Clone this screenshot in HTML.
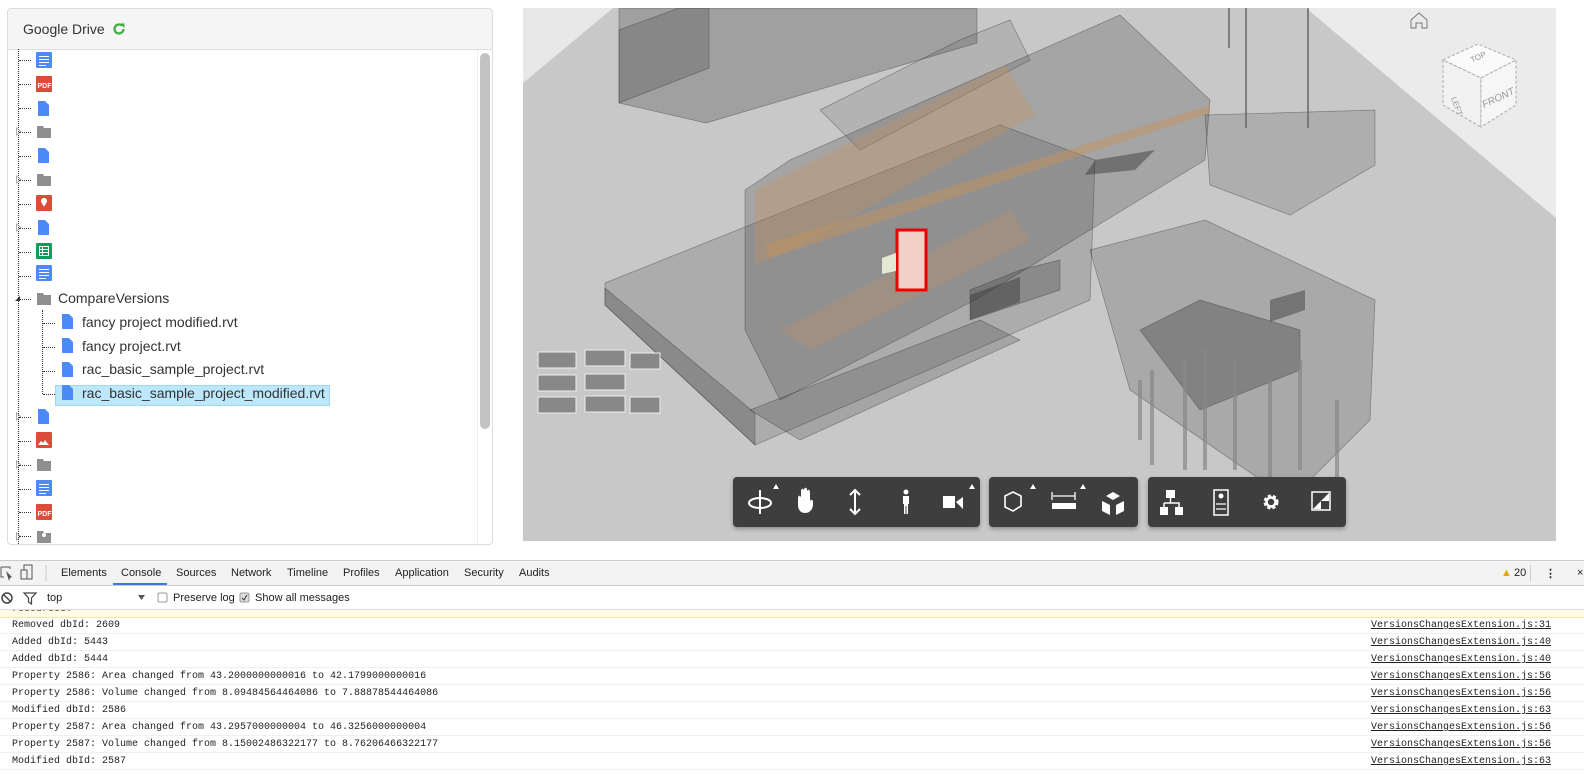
<!DOCTYPE html>
<html><head><meta charset="utf-8"><style>
*{margin:0;padding:0;box-sizing:border-box}
body{width:1584px;height:779px;background:#fff;position:relative;overflow:hidden;font-family:"Liberation Sans",sans-serif}
.panel{position:absolute;left:7px;top:8px;width:486px;height:537px;border:1px solid #ddd;border-radius:4px;overflow:hidden;background:#fff}
.hdr{height:41px;background:#f5f5f5;border-bottom:1px solid #ddd;font-size:14px;color:#333;padding:12px 0 0 15px}
.ab{position:absolute}
.dv{position:absolute;border-left:1px dotted #333;width:0}
.dh{position:absolute;border-top:1px dotted #333;height:0;width:12px}
.tx{position:absolute;font-size:14px;color:#333;white-space:nowrap}
.dt{position:absolute;left:0;right:0;font-size:11px;color:#222}
.row{position:absolute;left:0;width:1584px;height:17px;border-bottom:1px solid #f0f0f0;font-family:"Liberation Mono",monospace;font-size:10px;color:#222;line-height:17px;padding-left:12px}
.row span{position:absolute;right:33px;text-decoration:underline;color:#222}
.tb{position:absolute;top:477px;height:50px;background:#3e3e3e;border-radius:4px;box-shadow:0 2px 4px rgba(0,0,0,.3)}
</style></head><body>
<div class="panel">
<div class="hdr">Google Drive <svg width="14" height="14" viewBox="0 0 14 14" style="vertical-align:-2px;margin-left:3px"><path d="M11.5 7a4.5 4.5 0 1 1-1.3-3.2" stroke="#3cae3c" stroke-width="2.2" fill="none"/><path d="M8 1.5h4.5V6z" fill="#3cae3c"/></svg></div>
<div style="position:absolute;right:2px;top:44px;width:10px;height:376px;background:#c2c2c2;border-radius:5px"></div>
<div style="position:absolute;right:14px;top:41px;bottom:0;border-left:1px solid #eee"></div>
</div>
<div class="dv" style="left:18px;top:49px;height:495px"></div>
<svg class="ab" style="left:0;top:0" width="500" height="545">
<g fill="#4c8bf5">
<rect x="36" y="52" width="16" height="16" rx="1"/><rect x="36" y="265" width="16" height="16" rx="1"/><rect x="36" y="480" width="16" height="16" rx="1"/>
<path d="M38 101h7l4 4v11h-11z"/><path d="M38 148h7l4 4v11h-11z"/><path d="M38 220h7l4 4v11h-11z"/><path d="M38 409h7l4 4v11h-11z"/>
<path d="M62 314h7l4 4v11h-11z"/><path d="M62 338h7l4 4v11h-11z"/><path d="M62 362h7l4 4v11h-11z"/>
</g>
<g stroke="#fff" stroke-width="1"><path d="M39 56.5h10M39 59.5h10M39 62.5h10M39 65.5h7"/><path d="M39 269.5h10M39 272.5h10M39 275.5h10M39 278.5h7"/><path d="M39 484.5h10M39 487.5h10M39 490.5h10M39 493.5h7"/></g>
<g fill="#dd4b39"><rect x="36" y="76" width="16" height="16" rx="1"/><rect x="36" y="195" width="16" height="16" rx="1"/><rect x="36" y="432" width="16" height="16" rx="1"/><rect x="36" y="504" width="16" height="16" rx="1"/></g>
<text x="37.5" y="88" font-size="7" font-weight="bold" fill="#fff" font-family="Liberation Sans">PDF</text>
<text x="37.5" y="516" font-size="7" font-weight="bold" fill="#fff" font-family="Liberation Sans">PDF</text>
<path d="M44 198a3 3 0 0 1 3 3c0 2-3 5-3 6c0-1-3-4-3-6a3 3 0 0 1 3-3z" fill="#fff"/>
<path d="M38 445l3-4l2 2l2-3l3 4l1 1h-11z" fill="#fff"/>
<rect x="36" y="243" width="16" height="16" rx="1" fill="#0f9d58"/>
<g stroke="#fff" fill="none"><rect x="39.5" y="246.5" width="9" height="9"/><path d="M39.5 249.5h9M39.5 252.5h9M42.5 246.5v9"/></g>
<g fill="#8f8f8f"><path d="M37 126h6l1 2h7v10h-14z"/><path d="M37 174h6l1 2h7v10h-14z"/><path d="M37 293h6l1 2h7v10h-14z"/><path d="M37 459h6l1 2h7v10h-14z"/><path d="M37 531h6l1 2h7v10h-14z"/></g>
<circle cx="44" cy="535" r="2" fill="#fff"/>
<g fill="none" stroke="#999" stroke-width=".8"><path d="M16.5 128v7l4-3.5z"/><path d="M16.5 176v7l4-3.5z"/><path d="M16.5 224v7l4-3.5z"/><path d="M16.5 413v7l4-3.5z"/><path d="M16.5 461v7l4-3.5z"/><path d="M16.5 533v7l4-3.5z"/></g>
<path d="M15 301l5-5v5z" fill="#333"/>
</svg>
<div class="dh" style="left:19px;top:60px"></div><div class="dh" style="left:19px;top:84px"></div><div class="dh" style="left:19px;top:108px"></div><div class="dh" style="left:19px;top:132px"></div><div class="dh" style="left:19px;top:156px"></div><div class="dh" style="left:19px;top:180px"></div><div class="dh" style="left:19px;top:204px"></div><div class="dh" style="left:19px;top:228px"></div><div class="dh" style="left:19px;top:252px"></div><div class="dh" style="left:19px;top:276px"></div><div class="dh" style="left:19px;top:299px"></div><div class="dh" style="left:19px;top:417px"></div><div class="dh" style="left:19px;top:441px"></div><div class="dh" style="left:19px;top:465px"></div><div class="dh" style="left:19px;top:489px"></div><div class="dh" style="left:19px;top:512px"></div><div class="dh" style="left:19px;top:536px"></div>
<div class="dv" style="left:42px;top:310px;height:84px"></div>
<div class="dh" style="left:43px;top:323px"></div><div class="dh" style="left:43px;top:347px"></div><div class="dh" style="left:43px;top:371px"></div><div class="dh" style="left:43px;top:394px"></div>
<div class="ab" style="left:55px;top:385px;width:275px;height:21px;background:#bde7fb;border:1px solid #9fd6f2"></div>
<svg class="ab" style="left:0;top:0" width="100" height="420"><path d="M62 385h7l4 4v11h-11z" fill="#4c8bf5"/></svg>
<div class="tx" style="left:58px;top:290px">CompareVersions</div>
<div class="tx" style="left:82px;top:314px">fancy project modified.rvt</div>
<div class="tx" style="left:82px;top:338px">fancy project.rvt</div>
<div class="tx" style="left:82px;top:361px">rac_basic_sample_project.rvt</div>
<div class="tx" style="left:82px;top:385px">rac_basic_sample_project_modified.rvt</div>

<svg class="ab" style="left:523px;top:8px" width="1033" height="533" viewBox="523 8 1033 533">
<rect x="523" y="8" width="1033" height="533" fill="#c8c8c8"/>
<path d="M523 8h90l-90 75z" fill="#e8e8e8"/>
<path d="M1306 8h250v210z" fill="#ebebeb"/>
<g fill="#3a3a3a" stroke="#333" stroke-opacity=".45" stroke-width=".7">
<path fill-opacity=".28" d="M619 8h358v35l-271 80l-87-20z"/>
<path fill-opacity=".25" d="M619 30l60-22h30v60l-90 35z"/>
<path fill-opacity=".2" d="M605 283l395-158l95 35l-5 140l-335 145l-150-140z"/>
<path fill-opacity=".3" d="M605 288l150 125v32l-150-140z"/>
<path fill-opacity=".25" d="M745 190l45-30l330-145l90 85l-5 60l-230 140l-195 100l-35-70z"/>
<path fill-opacity=".15" d="M820 110l140-70l50-20l20 40l-170 90z"/>
<path fill-opacity=".22" d="M1090 250l115-30l170 80l-5 120l-80 80l-160-110z"/>
<path fill-opacity=".18" d="M1205 115l170-5v55l-85 50l-80-30z"/>
<path fill-opacity=".3" d="M970 290l50-20l40-10v30l-90 30z"/>
<path fill-opacity=".35" d="M1140 330l60-30l100 30v40l-100 40z"/>
<path fill-opacity=".25" d="M750 410l230-90l40 20l-220 100z"/>
</g>
<g fill="#c8925a"><path fill-opacity=".32" d="M755 190l250-125l30 50l-235 130l-45 20z"/><path fill-opacity=".45" d="M765 245l445-140v8l-440 145z"/><path fill-opacity=".25" d="M780 330l230-120l20 30l-220 110z"/></g>
<g fill="#333" fill-opacity=".45"><path d="M970 295l50-18v25l-50 18z"/><path d="M1095 160l60-10l-20 20l-50 5z"/><path d="M1270 300l35-10v20l-35 12z"/></g>
<g stroke="#888" stroke-width="4" stroke-opacity=".7"><path d="M1140 380v60M1152 370v95M1185 360v110M1205 350v120M1235 360v110M1270 380v120M1300 360v110M1337 400v90"/></g>
<g stroke="#666" stroke-width="1.5"><path d="M1246 8v120M1308 8v120M1229 8v40"/></g>
<rect x="897" y="230" width="29" height="60" fill="#f3d0c7" stroke="#e00" stroke-width="3"/>
<path d="M882 258l14-5v18l-14 3z" fill="#e3e9d2"/>
<g fill="#888" stroke="#eee" stroke-width="1"><rect x="538" y="352" width="38" height="16"/><rect x="585" y="350" width="40" height="16"/><rect x="630" y="353" width="30" height="16"/><rect x="538" y="375" width="38" height="16"/><rect x="585" y="374" width="40" height="16"/><rect x="538" y="397" width="38" height="16"/><rect x="585" y="396" width="40" height="16"/><rect x="630" y="397" width="30" height="16"/></g>
<path d="M1419 13l-8 7v8h5v-5h6v5h5v-8z" fill="none" stroke="#777"/>
<path d="M1443 60l35-16l38 16l-35 18z" fill="#fafafa" stroke="#aaa" stroke-dasharray="3 2"/>
<path d="M1443 60v45l38 22v-49z" fill="#f1f1f1" stroke="#aaa" stroke-dasharray="3 2"/>
<path d="M1481 78l35-18v45l-35 22z" fill="#f6f6f6" stroke="#aaa" stroke-dasharray="3 2"/>
<text x="1472" y="63" font-size="8" fill="#999" transform="rotate(-25 1472 63)">TOP</text>
<text x="1451" y="98" font-size="8" fill="#999" transform="rotate(70 1451 98)">LEFT</text>
<text x="1484" y="108" font-size="10" fill="#999" font-style="italic" transform="rotate(-25 1484 108)">FRONT</text>
</svg>
<div class="tb" style="left:733px;width:247px"></div>
<div class="tb" style="left:989px;width:149px"></div>
<div class="tb" style="left:1148px;width:198px"></div>
<svg class="ab" style="left:733px;top:477px" width="620" height="50" viewBox="733 477 620 50">
<g fill="#fff" stroke="#fff">
<path d="M773 489l3-5l3 5z" stroke="none"/><path d="M969 489l3-5l3 5z" stroke="none"/><path d="M1030 489l3-5l3 5z" stroke="none"/><path d="M1080 489l3-5l3 5z" stroke="none"/>
<g fill="none" stroke-width="2"><path d="M760 490v24"/><ellipse cx="760" cy="503" rx="11" ry="5"/></g>
<path d="M798 498c0-3 3-3 3 0v-7c0-3 3-3 3 0v-1c0-3 3-3 3 0v2c0-3 3-3 3 0v10c0-3 3-3 3 0v2c0 5-3 9-8 9c-4 0-7-3-7-8z" stroke="none"/>
<path d="M855 490v24M850 495l5-5l5 5M850 509l5 5l5-5" fill="none" stroke-width="2"/>
<circle cx="906" cy="492" r="2.5" stroke="none"/><path d="M903 496h6v8h-1v10h-1.5v-8h-1v8h-1.5v-10h-1z" stroke="none"/>
<path d="M943 496h12v12h-12z" stroke="none"/><path d="M956 502l7-5v12z" stroke="none"/>
<path d="M1005 496l8-4l8 4v10l-8 5l-8-4z" fill="none" stroke-width="1.6"/>
<path d="M1052 492v8M1075 492v8M1053 496h22" fill="none" stroke-width="1.3"/><rect x="1052" y="503" width="24" height="6" stroke="none"/>
<path d="M1113 492l7 4l-7 4l-7-4z" stroke="none"/><path d="M1102 501l8 4v10l-8-4z" stroke="none"/><path d="M1124 501l-8 4v10l8-4z" stroke="none"/>
<rect x="1166" y="490" width="9" height="8" stroke="none"/><rect x="1160" y="507" width="8" height="8" stroke="none"/><rect x="1175" y="507" width="8" height="8" stroke="none"/><path d="M1170.5 498v5M1164 503h15v4M1164 503v4" fill="none" stroke-width="1.5"/>
<rect x="1214" y="490" width="14" height="25" fill="none" stroke-width="1.5"/><circle cx="1221" cy="496" r="2.5" stroke="none"/><path d="M1216 504h10M1216 509h10" stroke-width="1.3"/>
<circle cx="1271" cy="502" r="6" fill="none" stroke-width="3" stroke-dasharray="3 2"/><circle cx="1271" cy="502" r="4.5" fill="none" stroke-width="2.5"/>
<path d="M1312 492h18v18h-18z" fill="none" stroke-width="1.5"/><path d="M1313 509l16-16v8h-8v8z" stroke="none"/>
</g></svg>

<div class="ab" style="left:0;top:560px;width:1584px;height:26px;background:#f3f3f3;border-top:1px solid #ccc;border-bottom:1px solid #ccc"></div>
<svg class="ab" style="left:0;top:563px" width="50" height="20"><path d="M1 4h9v2M1 4v10h3" fill="none" stroke="#555"/><path d="M6 8l6 6l-2 1l-1 3z" fill="#555"/><rect x="24" y="2" width="8" height="14" fill="none" stroke="#555"/><rect x="21" y="7" width="6" height="9" fill="#f3f3f3" stroke="#555"/><path d="M46 2v16" stroke="#ccc"/></svg>
<div class="dt" style="top:567px">
<span class="ab" style="left:61px">Elements</span><span class="ab" style="left:121px">Console</span><span class="ab" style="left:176px">Sources</span><span class="ab" style="left:231px">Network</span><span class="ab" style="left:287px">Timeline</span><span class="ab" style="left:343px">Profiles</span><span class="ab" style="left:395px">Application</span><span class="ab" style="left:464px">Security</span><span class="ab" style="left:519px">Audits</span>
<span class="ab" style="left:1501px;color:#e8a400">▲</span><span class="ab" style="left:1514px">20</span><span class="ab" style="left:1545px;font-weight:bold">⋮</span><span class="ab" style="left:1577px">×</span>
</div>
<div class="ab" style="left:113px;top:583px;width:54px;height:2px;background:#3879d9"></div>
<div class="ab" style="left:1530px;top:565px;height:16px;border-left:1px solid #ccc"></div>
<svg class="ab" style="left:0;top:590px" width="280" height="16"><circle cx="7" cy="8" r="5" fill="none" stroke="#444" stroke-width="1.5"/><path d="M3.5 4.5l7 7" stroke="#444" stroke-width="1.5"/><path d="M24 3h12l-4.5 5v6l-3-2v-4z" fill="none" stroke="#444" stroke-width="1.2"/><path d="M138 5h7l-3.5 5z" fill="#555"/><rect x="158" y="3" width="9" height="9" rx="1.5" fill="#fff" stroke="#999"/><rect x="240" y="3" width="9" height="9" rx="1.5" fill="#ddd" stroke="#999"/><path d="M242 8l2 2l3-5" stroke="#333" fill="none"/></svg>
<div class="dt" style="top:592px"><span class="ab" style="left:47px">top</span><span class="ab" style="left:173px">Preserve log</span><span class="ab" style="left:255px">Show all messages</span></div>
<div class="ab" style="left:0;top:609px;width:1584px;height:1px;background:#ddd"></div>
<div class="ab" style="left:0;top:610px;width:1584px;height:8px;background:#fffbe6;border-bottom:1px solid #f5e6a6;overflow:hidden;font-family:'Liberation Mono',monospace;font-size:10px;color:#5c3c00;padding-left:12px;line-height:0">resources.</div>
<div class="row" style="top:617px">Removed dbId: 2609<span>VersionsChangesExtension.js:31</span></div>
<div class="row" style="top:634px">Added dbId: 5443<span>VersionsChangesExtension.js:40</span></div>
<div class="row" style="top:651px">Added dbId: 5444<span>VersionsChangesExtension.js:40</span></div>
<div class="row" style="top:668px">Property 2586: Area changed from 43.2000000000016 to 42.1799000000016<span>VersionsChangesExtension.js:56</span></div>
<div class="row" style="top:685px">Property 2586: Volume changed from 8.09484564464086 to 7.88878544464086<span>VersionsChangesExtension.js:56</span></div>
<div class="row" style="top:702px">Modified dbId: 2586<span>VersionsChangesExtension.js:63</span></div>
<div class="row" style="top:719px">Property 2587: Area changed from 43.2957000000004 to 46.3256000000004<span>VersionsChangesExtension.js:56</span></div>
<div class="row" style="top:736px">Property 2587: Volume changed from 8.15002486322177 to 8.76206466322177<span>VersionsChangesExtension.js:56</span></div>
<div class="row" style="top:753px">Modified dbId: 2587<span>VersionsChangesExtension.js:63</span></div>
</body></html>
